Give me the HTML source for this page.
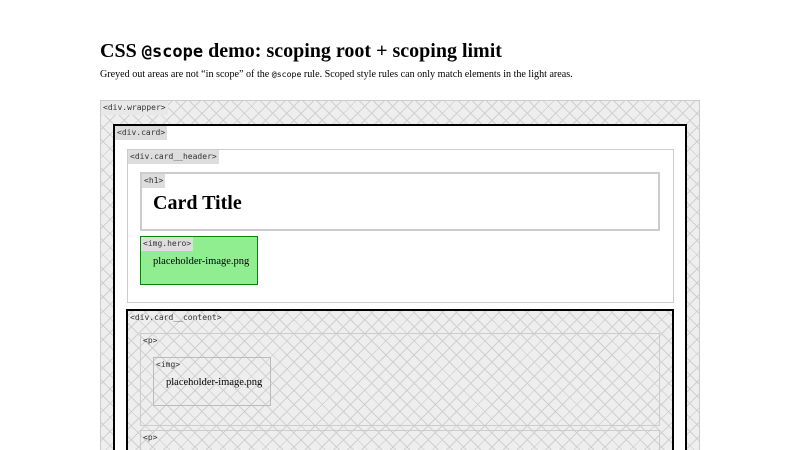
<!DOCTYPE html>
<html style="overflow:hidden;height:450px"><head><style>
body{margin:0;width:800px;height:450px;overflow:hidden;background:#fff;font-family:"Liberation Serif",serif;position:relative}
.a{position:absolute;box-sizing:border-box}
.hatch{background-color:#eee;background-image:repeating-linear-gradient(45deg,transparent 0 9px,#d0d0d0 9px 10px),repeating-linear-gradient(-45deg,transparent 0 9px,#d0d0d0 9px 10px)}
.lbl{position:absolute;left:0;top:0;font:8px "DejaVu Sans Mono","Liberation Mono",monospace;background:#ddd;color:#333;padding:2px 2px;line-height:10px;white-space:pre}
.lbl.t{background:transparent}
code{font-family:"DejaVu Sans Mono","Liberation Mono",monospace}
</style></head><body>
<div class="a" style="left:100px;top:40px;font-size:20px;font-weight:bold;white-space:nowrap">CSS <code style="font-size:17px">@scope</code> demo: scoping root + scoping limit</div>
<div class="a" style="left:100px;top:69px;font-size:10.1px;white-space:nowrap">Greyed out areas are not “in scope” of the <code style="font-size:8.2px">@scope</code> rule. Scoped style rules can only match elements in the light areas.</div>

<div class="a hatch" style="left:100px;top:100px;width:600px;height:350px;border:1px solid #ccc;border-bottom:0"><span class="lbl" style="background:#e8e8e8">&lt;div.wrapper&gt;</span></div>
<div class="a" style="left:113px;top:124px;width:574px;height:326px;border:2px solid #000;border-bottom:0;background:#fff"><span class="lbl">&lt;div.card&gt;</span></div>
<div class="a" style="left:127px;top:149px;width:547px;height:154px;border:1px solid #ccc;background:#fff"><span class="lbl">&lt;div.card__header&gt;</span></div>
<div class="a" style="left:140px;top:172px;width:520px;height:59px;border:2px solid #ccc;background:#fff"><span class="lbl">&lt;h1&gt;</span>
<div class="a" style="left:11px;top:18px;font-size:20px;font-weight:bold">Card Title</div></div>
<div class="a" style="left:140px;top:236px;width:118px;height:49px;border:1px solid #080;background:#90ee90"><span class="lbl" style="background:#ddd">&lt;img.hero&gt;</span>
<div class="a" style="left:12px;top:19px;font-size:10.5px;white-space:nowrap">placeholder-image.png</div></div>

<div class="a hatch" style="left:126px;top:309px;width:548px;height:141px;border:2px solid #000;border-bottom:0"><span class="lbl t">&lt;div.card__content&gt;</span></div>
<div class="a" style="left:140px;top:333px;width:520px;height:93px;border:1px solid #ccc"><span class="lbl t">&lt;p&gt;</span></div>
<div class="a" style="left:153px;top:357px;width:118px;height:49px;border:1px solid #bbb"><span class="lbl t">&lt;img&gt;</span>
<div class="a" style="left:12px;top:19px;font-size:10.5px;white-space:nowrap">placeholder-image.png</div></div>
<div class="a" style="left:140px;top:430px;width:520px;height:20px;border:1px solid #ccc;border-bottom:0"><span class="lbl t">&lt;p&gt;</span></div>
</body></html>
